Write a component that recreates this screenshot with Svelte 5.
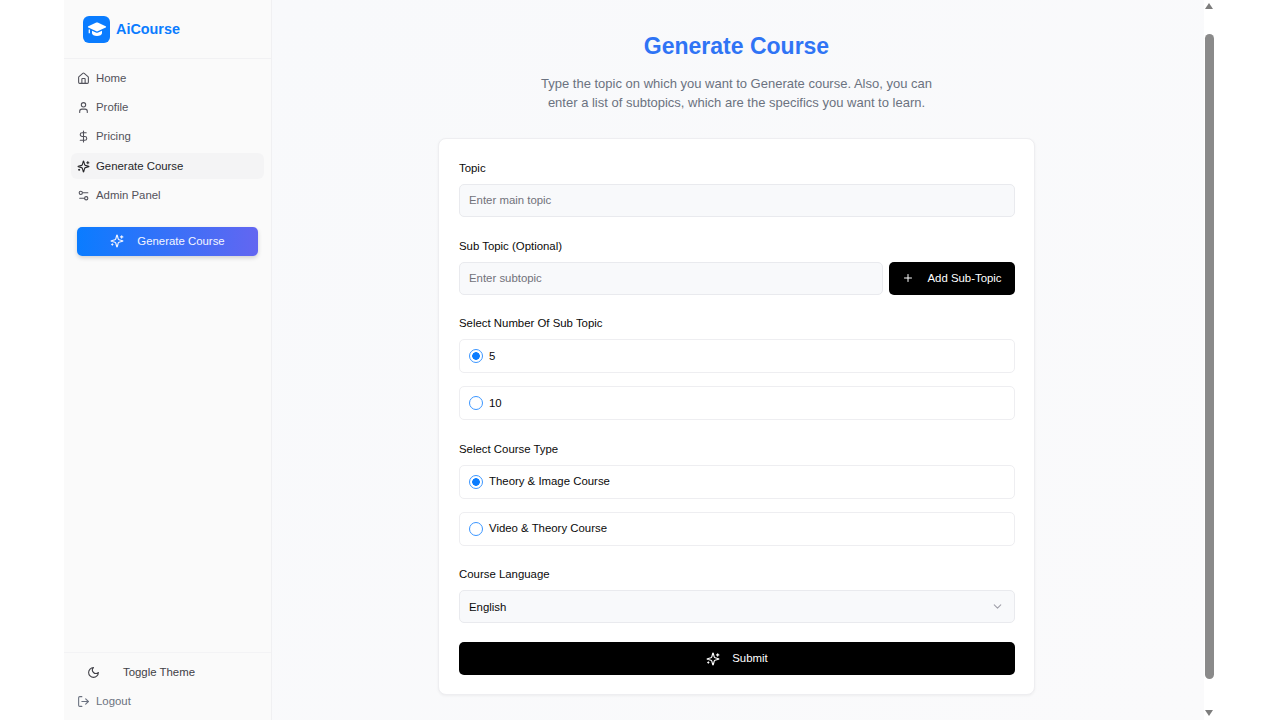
<script lang="ts">
  const sparkles = [
    'M9.937 15.5A2 2 0 0 0 8.5 14.063l-6.135-1.582a.5.5 0 0 1 0-.962L8.5 9.936A2 2 0 0 0 9.937 8.5l1.582-6.135a.5.5 0 0 1 .963 0L14.063 8.5A2 2 0 0 0 15.5 9.937l6.135 1.581a.5.5 0 0 1 0 .964L15.5 14.063a2 2 0 0 0-1.437 1.437l-1.582 6.135a.5.5 0 0 1-.963 0z',
    'M20 3v4',
    'M22 5h-4',
    'M4 17v2',
    'M5 18H3'
  ];

  const nav = [
    { label: 'Home', paths: ['M15 21v-8a1 1 0 0 0-1-1h-4a1 1 0 0 0-1 1v8', 'M3 10a2 2 0 0 1 .709-1.528l7-5.999a2 2 0 0 1 2.582 0l7 5.999A2 2 0 0 1 21 10v9a2 2 0 0 1-2 2H5a2 2 0 0 1-2-2z'] },
    { label: 'Profile', paths: ['M19 21v-2a4 4 0 0 0-4-4H9a4 4 0 0 0-4 4v2', 'M16 7a4 4 0 1 1-8 0 4 4 0 0 1 8 0z'] },
    { label: 'Pricing', paths: ['M12 2v20', 'M17 5H9.5a3.5 3.5 0 0 0 0 7h5a3.5 3.5 0 0 1 0 7H6'] },
    { label: 'Generate Course', paths: sparkles, active: true },
    { label: 'Admin Panel', paths: ['M20 7h-9', 'M14 17H5', 'M20 17a3 3 0 1 1-6 0 3 3 0 0 1 6 0z', 'M10 7a3 3 0 1 1-6 0 3 3 0 0 1 6 0z'] }
  ];

  let topic = $state('');
  let subtopic = $state('');
  let count = $state('5');
  let courseType = $state('Theory & Image Course');
  let language = $state('English');
</script>

{#snippet icon(paths: string[], size: number)}
  <svg width={size} height={size} viewBox="0 0 24 24" fill="none" stroke="currentColor" stroke-width="2" stroke-linecap="round" stroke-linejoin="round">
    {#each paths as d}
      <path {d}></path>
    {/each}
  </svg>
{/snippet}

{#snippet radio(value: string, current: string)}
  <span class="radio-dot" class:on={current === value}></span>
  <span class="lift">{value}</span>
{/snippet}

<div class="stage">
  <aside class="sidebar">
    <div class="brand">
      <div class="logo">
        <svg width="20" height="20" viewBox="0 0 24 24" fill="#fff">
          <path d="M11.2 4.3a2 2 0 0 1 1.6 0l9.6 4.4a.9.9 0 0 1 0 1.6l-9.6 4.4a2 2 0 0 1-1.6 0L1.6 10.3a.9.9 0 0 1 0-1.6z"></path>
          <path d="M6 14.2l4.6 2.1a3.4 3.4 0 0 0 2.8 0l4.6-2.1V17c0 1.8-2.7 3.4-6 3.4S6 18.8 6 17z"></path>
          <path d="M2 12.5h1.5V17H2z"></path>
        </svg>
      </div>
      <span class="brand-name">AiCourse</span>
    </div>

    <nav class="nav">
      {#each nav as item}
        <div class="nav-item" class:active={item.active}>
          {@render icon(item.paths, 13)}
          <span class="lift">{item.label}</span>
        </div>
      {/each}
    </nav>

    <button class="gen-btn">
      {@render icon(sparkles, 14)}
      <span>Generate Course</span>
    </button>

    <div class="sidebar-foot">
      <div class="theme-row">
        {@render icon(['M12 3a6 6 0 0 0 9 9 9 9 0 1 1-9-9Z'], 13)}
        <span class="lift">Toggle Theme</span>
      </div>
      <div class="logout-row">
        {@render icon(['m16 17 5-5-5-5', 'M21 12H9', 'M9 21H5a2 2 0 0 1-2-2V5a2 2 0 0 1 2-2h4'], 13)}
        <span class="lift">Logout</span>
      </div>
    </div>
  </aside>

  <main class="main">
    <h1>Generate Course</h1>
    <p class="intro">Type the topic on which you want to Generate course. Also, you can<br />enter a list of subtopics, which are the specifics you want to learn.</p>

    <form class="card" onsubmit={(e) => e.preventDefault()}>
      <div class="label first">Topic</div>
      <input class="field" placeholder="Enter main topic" bind:value={topic} />

      <div class="label">Sub Topic (Optional)</div>
      <div class="sub-row">
        <input class="field" placeholder="Enter subtopic" bind:value={subtopic} />
        <button type="button" class="add-btn">
          {@render icon(['M5 12h14', 'M12 5v14'], 12)}
          <span class="lift">Add Sub-Topic</span>
        </button>
      </div>

      <div class="label">Select Number Of Sub Topic</div>
      <div class="options">
        {#each ['5', '10'] as value}
          <button type="button" class="option" onclick={() => (count = value)}>
            {@render radio(value, count)}
          </button>
        {/each}
      </div>

      <div class="label">Select Course Type</div>
      <div class="options">
        {#each ['Theory & Image Course', 'Video & Theory Course'] as value}
          <button type="button" class="option" onclick={() => (courseType = value)}>
            {@render radio(value, courseType)}
          </button>
        {/each}
      </div>

      <div class="label">Course Language</div>
      <div class="field select">
        <span>{language}</span>
        <span class="chevron">{@render icon(['m6 9 6 6 6-6'], 13)}</span>
      </div>

      <button type="submit" class="submit">
        {@render icon(sparkles, 14)}
        <span class="lift">Submit</span>
      </button>
    </form>
  </main>

  <div class="scrollbar">
    <span class="arrow up"></span>
    <div class="thumb"></div>
    <span class="arrow down"></span>
  </div>
</div>

<style>
  :global(body) {
    background: #fff;
    font-family: "Liberation Sans", Arial, sans-serif;
  }

  .stage {
    display: flex;
    width: 1152px;
    height: 720px;
    margin: 0 auto;
    overflow: hidden;
    color: #0a0a0a;
    font-size: 11.4px;
  }

  .lift {
    margin-bottom: 1px;
  }

  .sidebar {
    display: flex;
    flex-direction: column;
    width: 208px;
    flex-shrink: 0;
    background: #fafafa;
    border-right: 1px solid #f0f0f2;
    box-sizing: border-box;
  }

  .brand {
    display: flex;
    align-items: center;
    gap: 6px;
    height: 59px;
    padding: 0 19px;
    box-sizing: border-box;
    border-bottom: 1px solid #f1f1f3;
  }

  .logo {
    display: flex;
    align-items: center;
    justify-content: center;
    width: 27px;
    height: 27px;
    border-radius: 6px;
    background: #0a7cff;
  }

  .brand-name {
    font-size: 14.4px;
    font-weight: 700;
    color: #0a7cff;
  }

  .nav {
    display: flex;
    flex-direction: column;
    gap: 3.25px;
    padding: 6.4px 7px 0;
  }

  .nav-item {
    display: flex;
    align-items: center;
    gap: 6px;
    height: 26px;
    padding: 0 6px;
    border-radius: 6px;
    color: #52525b;
  }

  .nav-item.active {
    background: #f4f4f5;
    color: #27272a;
  }

  .gen-btn {
    display: flex;
    align-items: center;
    justify-content: center;
    gap: 13px;
    height: 29px;
    margin: 18.4px 13px 0;
    padding-top: 1px;
    border: 0;
    border-radius: 5px;
    background: linear-gradient(90deg, #0a7cff, #6366f1);
    box-shadow: 0 2px 4px rgba(0, 0, 0, 0.16);
    color: #f4f6ff;
    font: inherit;
  }

  .sidebar-foot {
    display: flex;
    flex-direction: column;
    margin-top: auto;
    padding: 1px 0 9px;
    border-top: 1px solid #f3f3f5;
  }

  .theme-row {
    display: flex;
    align-items: center;
    gap: 23px;
    height: 37px;
    padding: 0 23px;
    color: #3f3f46;
  }

  .logout-row {
    display: flex;
    align-items: center;
    gap: 6px;
    height: 20px;
    padding: 0 13px;
    color: #6b7280;
  }

  .main {
    flex: 1;
    display: flex;
    flex-direction: column;
    align-items: center;
    padding-right: 3px;
    background: linear-gradient(135deg, #f8f9fb, #fafafb);
    min-width: 0;
  }

  h1 {
    margin: 31px 0 0;
    font-size: 23px;
    line-height: 30px;
    font-weight: 700;
    color: #2f74f5;
  }

  .intro {
    margin: 13px 0 0;
    text-align: center;
    font-size: 13px;
    line-height: 19px;
    color: #6b7280;
  }

  .card {
    display: flex;
    flex-direction: column;
    width: 597px;
    height: 557px;
    margin-top: 26px;
    padding: 0 19px 0 20px;
    box-sizing: border-box;
    background: #fff;
    border: 1px solid #eeeef1;
    border-radius: 8px;
    box-shadow: 0 1px 3px rgba(0, 0, 0, 0.05);
  }

  .label {
    height: 16px;
    margin: 20.5px 0 8px;
    line-height: 16px;
  }

  .label.first {
    margin-top: 21px;
  }

  .field {
    display: block;
    width: 100%;
    height: 33px;
    padding: 0 9px 1px;
    box-sizing: border-box;
    background: #f8f9fb;
    border: 1px solid #e9eaee;
    border-radius: 5px;
    font: inherit;
    color: inherit;
    outline: none;
  }

  .field::placeholder {
    color: #71717a;
  }

  .sub-row {
    display: flex;
    gap: 6px;
  }

  .add-btn {
    display: flex;
    align-items: center;
    justify-content: center;
    gap: 13px;
    flex: 0 0 126px;
    height: 33px;
    border: 0;
    border-radius: 5px;
    background: #000;
    color: #fff;
    font: inherit;
  }

  .options {
    display: flex;
    flex-direction: column;
    gap: 13px;
  }

  .option {
    display: flex;
    align-items: center;
    gap: 6px;
    height: 34px;
    padding: 0 9px;
    background: #fff;
    border: 1px solid #eeeef1;
    border-radius: 5px;
    color: inherit;
    font: inherit;
    text-align: left;
  }

  .radio-dot {
    display: block;
    width: 12px;
    height: 12px;
    border: 1px solid #3b96ff;
    border-radius: 50%;
    box-sizing: content-box;
    flex-shrink: 0;
  }

  .radio-dot.on {
    background: radial-gradient(circle, #0a7cff 0 3.5px, transparent 4.1px);
  }

  .select {
    display: flex;
    align-items: center;
    justify-content: space-between;
    padding-bottom: 0;
  }

  .chevron {
    display: flex;
    color: #a1a1aa;
    margin-right: 1px;
  }

  .submit {
    display: flex;
    align-items: center;
    justify-content: center;
    gap: 12px;
    height: 33px;
    margin-top: 19px;
    border: 0;
    border-radius: 5px;
    background: #000;
    color: #fff;
    font: inherit;
  }

  .scrollbar {
    display: flex;
    flex-direction: column;
    width: 12px;
    padding-left: 1px;
    box-sizing: border-box;
    flex-shrink: 0;
    background: #fff;
  }

  .arrow {
    width: 0;
    height: 0;
    border-left: 4.5px solid transparent;
    border-right: 4.5px solid transparent;
  }

  .arrow.up {
    margin-top: 3px;
    border-bottom: 6px solid #7d7d7d;
  }

  .arrow.down {
    margin-top: 31px;
    border-top: 6px solid #7d7d7d;
  }

  .thumb {
    width: 9px;
    height: 645px;
    margin-top: 25px;
    background: #8a8a8a;
    border-radius: 4.5px;
  }
</style>
